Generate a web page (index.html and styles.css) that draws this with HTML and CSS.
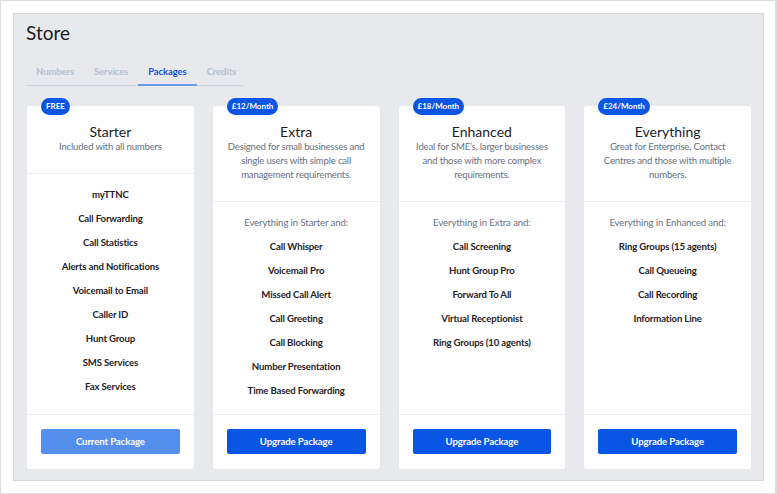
FILE: index.html
```html
<!DOCTYPE html>
<html lang="en">
<head>
<meta charset="utf-8">
<title>Store</title>
<link rel="stylesheet" href="styles.css">
</head>
<body>
<div class="frame">
  <div class="panel">
    <h1 class="page-title">Store</h1>
    <nav class="tabs">
      <span class="tab">Numbers</span>
      <span class="tab">Services</span>
      <span class="tab active">Packages</span>
      <span class="tab">Credits</span>
    </nav>
    <div class="cards">
      <div class="card">
        <span class="badge">FREE</span>
        <div class="card-head">
          <h2 class="card-title">Starter</h2>
          <p class="card-sub">Included with all numbers</p>
        </div>
        <ul class="features">
          <li>myTTNC</li>
          <li>Call Forwarding</li>
          <li>Call Statistics</li>
          <li>Alerts and Notifications</li>
          <li>Voicemail to Email</li>
          <li>Caller ID</li>
          <li>Hunt Group</li>
          <li>SMS Services</li>
          <li>Fax Services</li>
        </ul>
        <div class="card-foot"><button class="btn current">Current Package</button></div>
      </div>
      <div class="card">
        <span class="badge">£12/Month</span>
        <div class="card-head">
          <h2 class="card-title">Extra</h2>
          <p class="card-sub">Designed for small businesses and single users with simple call management requirements.</p>
        </div>
        <ul class="features">
          <li class="intro">Everything in Starter and:</li>
          <li>Call Whisper</li>
          <li>Voicemail Pro</li>
          <li>Missed Call Alert</li>
          <li>Call Greeting</li>
          <li>Call Blocking</li>
          <li>Number Presentation</li>
          <li>Time Based Forwarding</li>
        </ul>
        <div class="card-foot"><button class="btn">Upgrade Package</button></div>
      </div>
      <div class="card">
        <span class="badge">£18/Month</span>
        <div class="card-head">
          <h2 class="card-title">Enhanced</h2>
          <p class="card-sub">Ideal for SME’s, larger businesses and those with more complex requirements.</p>
        </div>
        <ul class="features">
          <li class="intro">Everything in Extra and:</li>
          <li>Call Screening</li>
          <li>Hunt Group Pro</li>
          <li>Forward To All</li>
          <li>Virtual Receptionist</li>
          <li>Ring Groups (10 agents)</li>
        </ul>
        <div class="card-foot"><button class="btn">Upgrade Package</button></div>
      </div>
      <div class="card">
        <span class="badge">£24/Month</span>
        <div class="card-head">
          <h2 class="card-title">Everything</h2>
          <p class="card-sub">Great for Enterprise, Contact Centres and those with multiple numbers.</p>
        </div>
        <ul class="features">
          <li class="intro">Everything in Enhanced and:</li>
          <li>Ring Groups (15 agents)</li>
          <li>Call Queueing</li>
          <li>Call Recording</li>
          <li>Information Line</li>
        </ul>
        <div class="card-foot"><button class="btn">Upgrade Package</button></div>
      </div>
    </div>
  </div>
</div>
</body>
</html>
```
FILE: styles.css
```css
* { box-sizing: border-box; }
html, body { margin: 0; padding: 0; background: #ffffff; }
body { font-family: Lato, "Noto Sans", sans-serif; color: #1d1f23; }

.frame {
  width: 777px;
  height: 494px;
  border: 1px solid #dcdcdc;
  border-right-width: 2px;
  padding: 12px 11px 12px 12px;
  display: flex;
  flex-direction: column;
}

.panel {
  flex: 1;
  background: #e8e9ed;
  border: 1px solid #d6d7db;
  padding: 7px 12px 11px 13px;
  display: flex;
  flex-direction: column;
}

.page-title {
  margin: 0 0 0 -1px;
  font-size: 19px;
  line-height: 24px;
  font-weight: 400;
  color: #1b1c1f;
}

.tabs {
  display: flex;
  margin: 20px 0 0 -1px;
  width: 217px;
  border-bottom: 1px solid #cfd5df;
}
.tab {
  padding: 0 10px 6px;
  font-size: 9.5px;
  letter-spacing: -0.1px;
  line-height: 14px;
  font-weight: 700;
  color: #b6c1cf;
}
.tab.active {
  color: #1652d9;
  border-bottom: 2px solid #6b9be8;
  margin-bottom: -1px;
  padding-bottom: 5px;
}

.cards {
  flex: 1;
  margin-top: 20px;
  display: grid;
  grid-template-columns: repeat(4, 1fr);
  gap: 19px;
}

.card {
  position: relative;
  background: #ffffff;
  border-radius: 3px;
  display: flex;
  flex-direction: column;
}

.badge {
  position: absolute;
  top: -8px;
  left: 14px;
  height: 17px;
  line-height: 17px;
  padding: 0 5px;
  border-radius: 9px;
  background: #0a56e4;
  color: #ffffff;
  font-size: 8px;
  font-weight: 700;
}

.card-head {
  padding: 18px 12px 19px;
  text-align: center;
  border-bottom: 1px solid #eceef1;
}
.card-title {
  margin: 0;
  font-size: 14px;
  line-height: 16px;
  font-weight: 400;
  color: #1b1c1f;
}
.card-sub {
  margin: 0;
  font-size: 9.6px;
  letter-spacing: -0.2px;
  line-height: 14px;
  color: #687181;
}

.features {
  flex: 1;
  list-style: none;
  margin: 0;
  padding: 9px 6px;
  text-align: center;
}
.features li {
  font-size: 9.6px;
  letter-spacing: -0.15px;
  line-height: 24px;
  font-weight: 700;
  color: #1f2227;
}
.features li.intro {
  font-weight: 400;
  color: #687181;
  letter-spacing: -0.1px;
}

.card-foot {
  border-top: 1px solid #eceef1;
  padding: 14px 14px 15px;
}
.btn {
  display: block;
  width: 100%;
  height: 25px;
  border: none;
  border-radius: 2px;
  background: #0a56e4;
  color: #ffffff;
  font-family: Lato, "Noto Sans", sans-serif;
  font-size: 9.6px;
  letter-spacing: -0.1px;
  font-weight: 700;
  padding: 0;
}
.btn.current {
  background: #558fee;
}
```
